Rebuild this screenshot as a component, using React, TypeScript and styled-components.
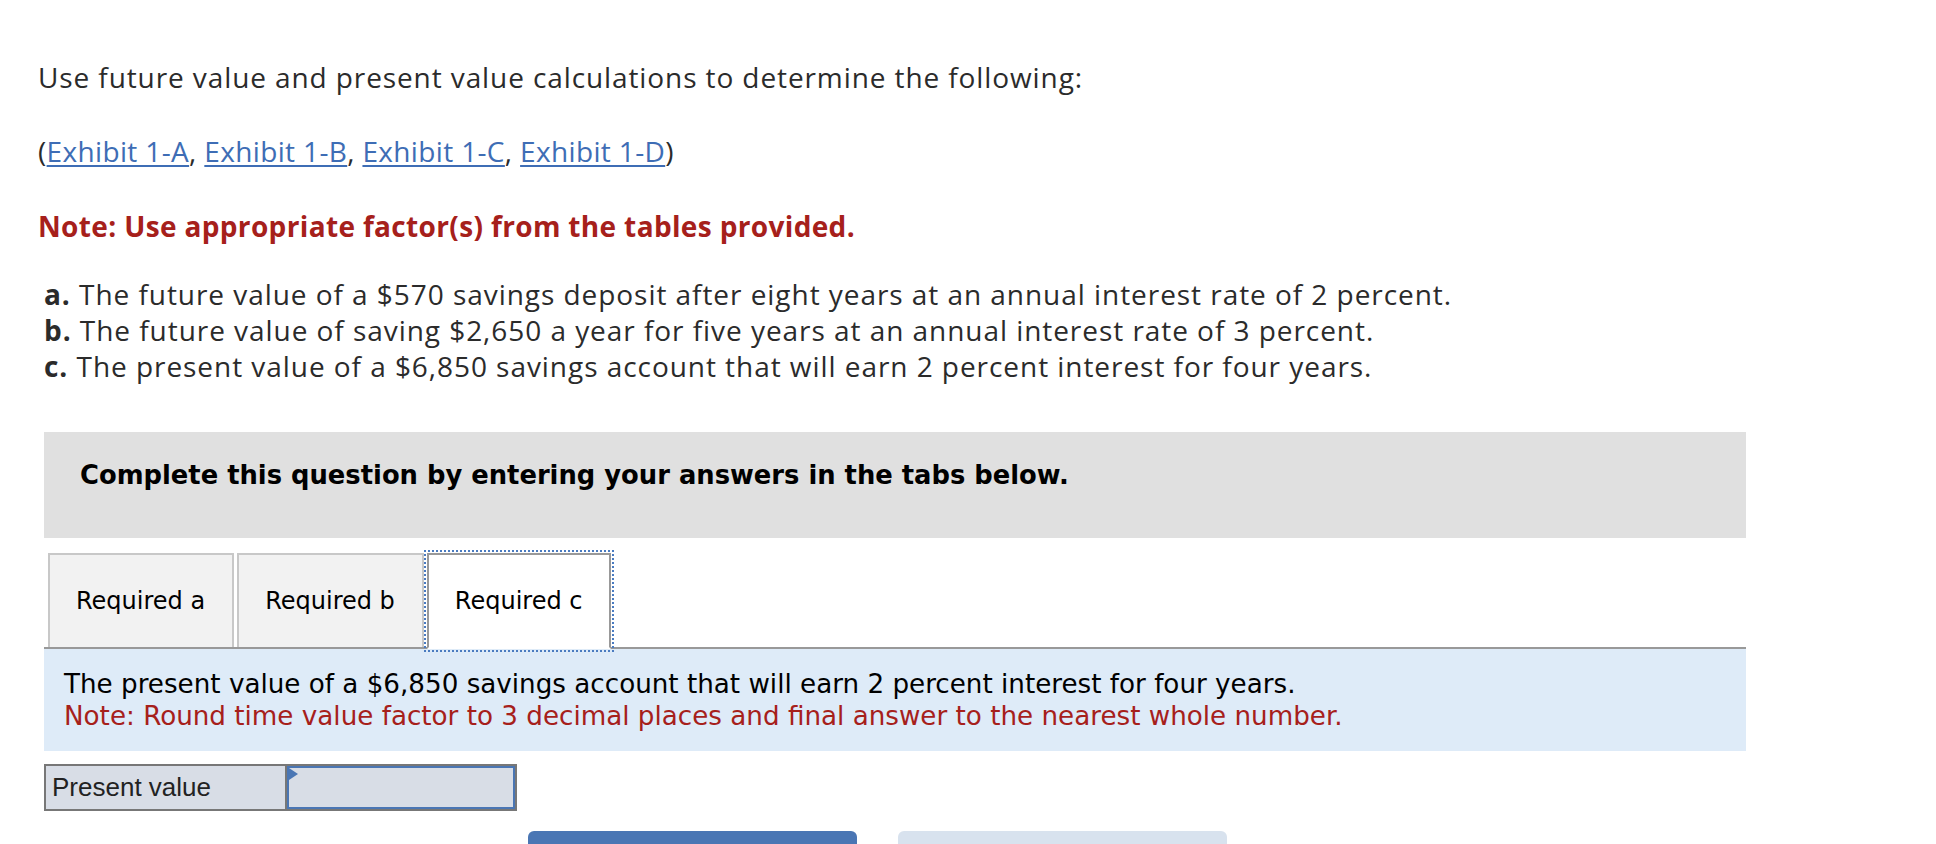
import styled, { createGlobalStyle } from 'styled-components';

const GlobalStyle = createGlobalStyle`
  html, body {
    margin: 0;
    padding: 0;
    background: #ffffff;
  }
  body {
    font-family: 'Open Sans', 'Lato', sans-serif;
    color: #2b2b2b;
  }
`;

const parts = [
  { letter: 'a.', text: 'The future value of a $570 savings deposit after eight years at an annual interest rate of 2 percent.' },
  { letter: 'b.', text: 'The future value of saving $2,650 a year for five years at an annual interest rate of 3 percent.' },
  { letter: 'c.', text: 'The present value of a $6,850 savings account that will earn 2 percent interest for four years.' },
];

const exhibits = ['Exhibit 1-A', 'Exhibit 1-B', 'Exhibit 1-C', 'Exhibit 1-D'];
const tabs = ['Required a', 'Required b', 'Required c'];

export default function App() {
  const activeTab = 2;

  return (
    <>
      <GlobalStyle />
      <Page>
        <Prompt>Use future value and present value calculations to determine the following:</Prompt>
        <Exhibits>
          (
          {exhibits.map((name, i) => (
            <span key={name}>
              <ExhibitLink href="#">{name}</ExhibitLink>
              {i < exhibits.length - 1 && ', '}
            </span>
          ))}
          )
        </Exhibits>
        <Note>Note: Use appropriate factor(s) from the tables provided.</Note>
        <PartList>
          {parts.map((p) => (
            <Part key={p.letter}>
              <strong>{p.letter}</strong> {p.text}
            </Part>
          ))}
        </PartList>

        <Block>
          <Instructions>Complete this question by entering your answers in the tabs below.</Instructions>

          <TabBar>
            {tabs.map((t, i) => (
              <Tab key={t} $active={i === activeTab}>
                {t}
              </Tab>
            ))}
          </TabBar>

          <TabPanel>
            <PanelText>The present value of a $6,850 savings account that will earn 2 percent interest for four years.</PanelText>
            <PanelNote>Note: Round time value factor to 3 decimal places and final answer to the nearest whole number.</PanelNote>
          </TabPanel>

          <AnswerRow>
            <AnswerLabel>Present value</AnswerLabel>
            <AnswerCell>
              <AnswerInput type="text" aria-label="Present value" />
            </AnswerCell>
          </AnswerRow>

          <ButtonRow>
            <NavButton $primary />
            <NavButton />
          </ButtonRow>
        </Block>
      </Page>
    </>
  );
}

const Page = styled.div`
  padding: 60px 0 0 38px;
`;

const Prompt = styled.p`
  margin: 0;
  font-size: 28px;
  line-height: 34px;
  letter-spacing: 0.9px;
`;

const Exhibits = styled.p`
  margin: 40px 0 0;
  font-size: 28px;
  line-height: 34px;
  letter-spacing: 0.35px;
`;

const ExhibitLink = styled.a`
  color: #3e6db5;
  text-decoration: underline;
  text-underline-offset: 3px;
  text-decoration-thickness: 2px;
`;

const Note = styled.p`
  margin: 41px 0 0;
  font-size: 28px;
  line-height: 34px;
  letter-spacing: 0.35px;
  font-weight: bold;
  color: #a6201b;
`;

const PartList = styled.div`
  margin: 33px 0 0;
  padding-left: 6px;
`;

const Part = styled.div`
  font-size: 28px;
  line-height: 36px;
  letter-spacing: 0.95px;

  strong {
    font-weight: bold;
  }
`;

const Block = styled.div`
  margin: 48px 0 0 6px;
  width: 1702px;
`;

const Instructions = styled.div`
  box-sizing: border-box;
  height: 106px;
  padding: 27px 36px 0;
  background: #e0e0e0;
  font-family: 'DejaVu Sans', Verdana, sans-serif;
  font-weight: bold;
  font-size: 25.8px;
  line-height: 32px;
  color: #000;
`;

const TabBar = styled.div`
  display: flex;
  align-items: flex-end;
  gap: 3px;
  margin-top: 15px;
  padding-left: 4px;
  border-bottom: 2px solid #999;
`;

const Tab = styled.button<{ $active?: boolean }>`
  box-sizing: border-box;
  height: ${(p) => (p.$active ? '96px' : '94px')};
  margin-bottom: ${(p) => (p.$active ? '-2px' : '0')};
  padding: 0 27px 0 26px;
  font-family: 'DejaVu Sans', Verdana, sans-serif;
  font-size: 24px;
  color: #000;
  background: ${(p) => (p.$active ? '#ffffff' : '#f2f2f2')};
  border: 2px solid ${(p) => (p.$active ? '#999' : '#c8c8c8')};
  border-bottom: ${(p) => (p.$active ? '2px solid #ffffff' : 'none')};
  outline: ${(p) => (p.$active ? '2px dotted #4a7bc0' : 'none')};
  outline-offset: 1px;
  cursor: pointer;
`;

const TabPanel = styled.div`
  padding: 19px 20px;
  background: #deebf8;
  font-family: 'DejaVu Sans', Verdana, sans-serif;
  font-size: 26.2px;
  line-height: 32px;
`;

const PanelText = styled.div`
  color: #000;
`;

const PanelNote = styled.div`
  color: #a6201b;
`;

const AnswerRow = styled.div`
  display: flex;
  width: 473px;
  height: 47px;
  margin-top: 13px;
  box-sizing: border-box;
  border: 2px solid #777;
  background: #d8dde6;
`;

const AnswerLabel = styled.div`
  display: flex;
  align-items: center;
  width: 241px;
  padding-left: 6px;
  box-sizing: border-box;
  border-right: 2px solid #777;
  font-family: 'Liberation Sans', Arial, sans-serif;
  font-size: 26px;
  color: #222;
`;

const AnswerCell = styled.div`
  position: relative;
  flex: 1;

  &::before {
    content: '';
    position: absolute;
    top: 2px;
    left: 2px;
    border-top: 6px solid transparent;
    border-bottom: 6px solid transparent;
    border-left: 9px solid #4a76b4;
  }
`;

const AnswerInput = styled.input`
  box-sizing: border-box;
  width: 100%;
  height: 100%;
  margin: 0;
  border: 2px solid #4a76b4;
  background: transparent;
  font-size: 22px;
  outline: none;
`;

const ButtonRow = styled.div`
  display: flex;
  gap: 41px;
  margin-top: 20px;
  padding-left: 484px;
`;

const NavButton = styled.button<{ $primary?: boolean }>`
  width: 329px;
  height: 50px;
  border: none;
  border-radius: 6px 6px 0 0;
  background: ${(p) => (p.$primary ? '#4a76b4' : '#d8e2ee')};
`;
